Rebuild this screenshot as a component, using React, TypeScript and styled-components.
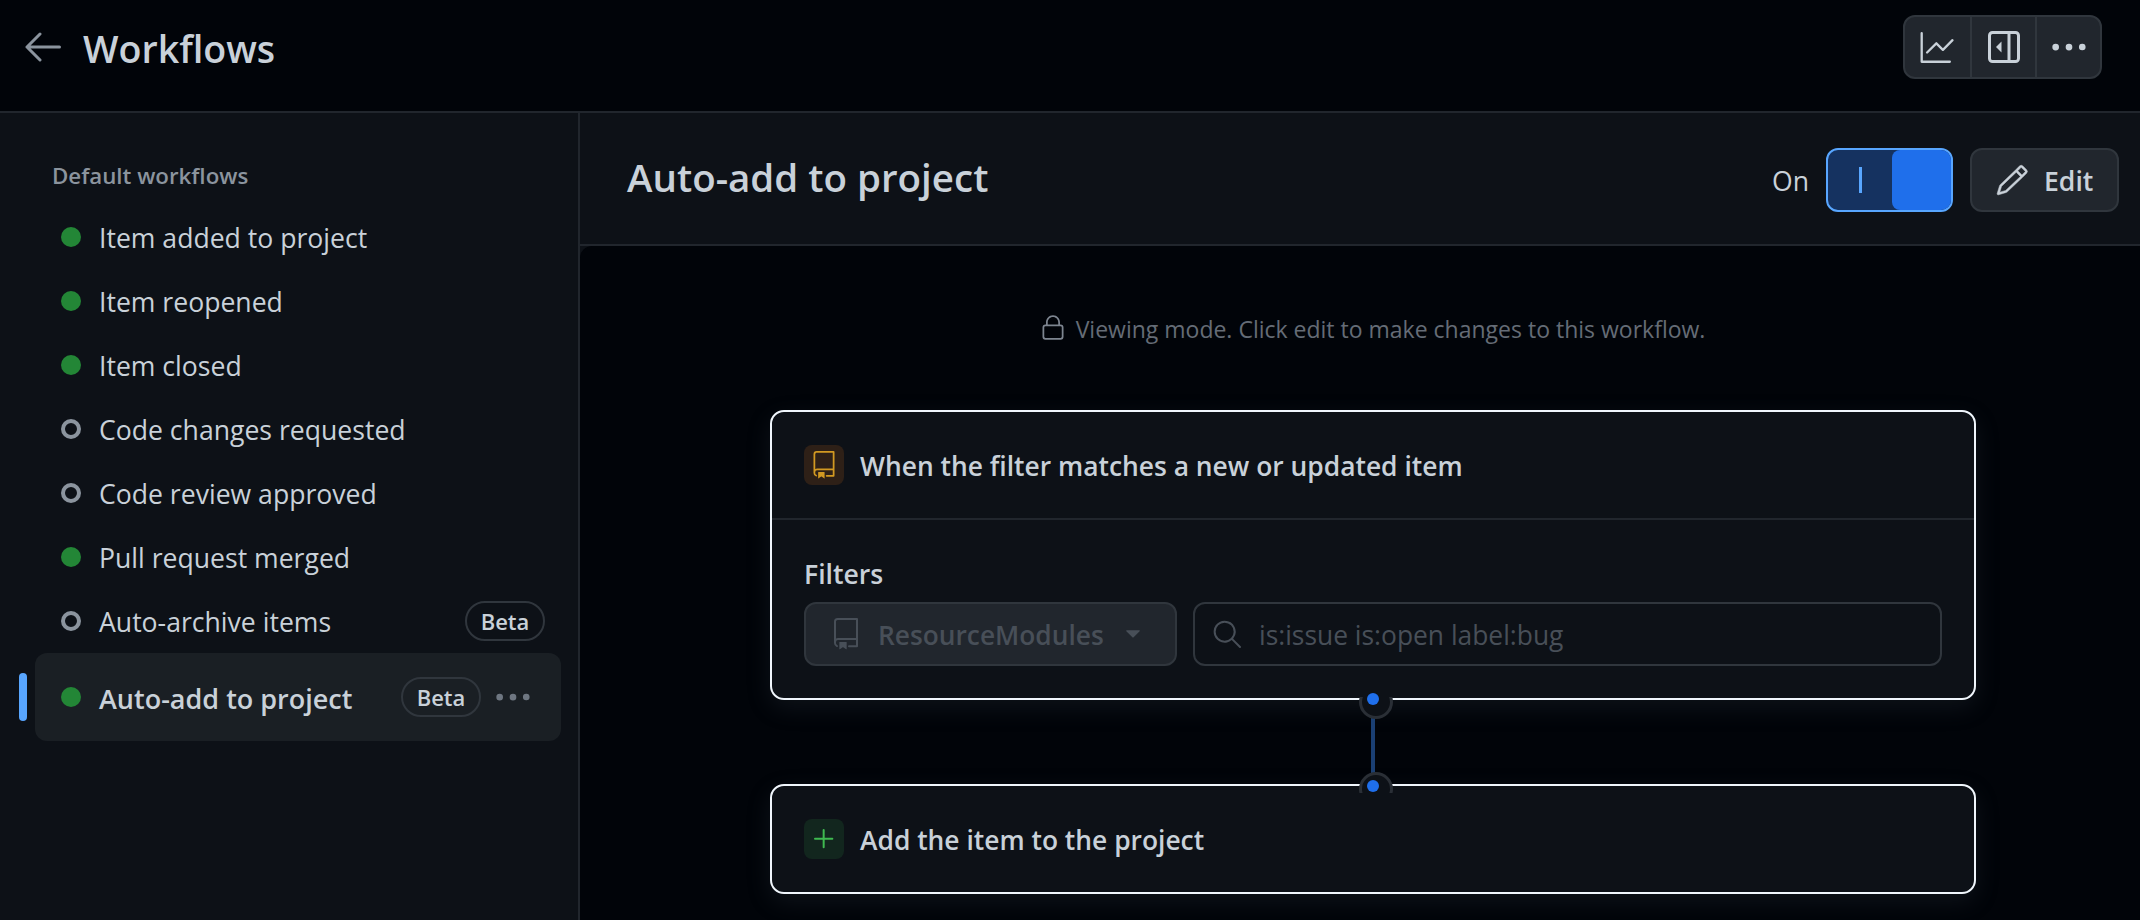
import { createGlobalStyle } from 'styled-components'
import styled from 'styled-components'
import {
  GoGraph,
  GoKebabHorizontal,
  GoLock,
  GoPencil,
  GoPlus,
  GoRepo,
  GoSearch,
  GoTriangleDown,
} from 'react-icons/go'

const colors = {
  canvas: '#010409',
  panel: '#0d1117',
  line: '#21262d',
  control: '#21262d',
  controlLine: '#30363d',
  text: '#c9d1d9',
  muted: '#8b949e',
  faint: '#484f58',
  blue: '#1f6feb',
  sky: '#58a6ff',
  green: '#238636',
}

const GlobalStyle = createGlobalStyle`
  * { box-sizing: border-box; }
  html, body { margin: 0; padding: 0; height: 100%; background: ${colors.canvas}; }
  body {
    font-family: "Open Sans", "Noto Sans", sans-serif;
    font-size: 26.6px;
    color: ${colors.text};
    overflow: hidden;
  }
`

const Page = styled.div`
  display: flex;
  flex-direction: column;
  width: 2140px;
  height: 920px;
`

const TopBar = styled.header`
  display: flex;
  align-items: center;
  justify-content: space-between;
  flex: 0 0 113px;
  padding: 0 38px 17px 25px;
  border-bottom: 2px solid ${colors.line};
  background: ${colors.canvas};
`

const TitleGroup = styled.div`
  display: flex;
  align-items: center;
  gap: 22px;
`

const BackArrow = styled.svg`
  width: 36px;
  height: 30px;
  fill: none;
  stroke: ${colors.muted};
  stroke-width: 3;
  stroke-linecap: round;
  stroke-linejoin: round;
`

const PageTitle = styled.h1`
  margin: 3px 0 0;
  font-size: 37.6px;
  font-weight: 600;
  line-height: 48px;
`

const ButtonGroup = styled.div`
  display: flex;
  height: 64px;
  border: 2px solid ${colors.controlLine};
  border-radius: 12px;
  background: ${colors.control};
`

const GroupButton = styled.div`
  display: flex;
  align-items: center;
  justify-content: center;
  width: 65px;
  color: ${colors.text};
  & + & { border-left: 2px solid ${colors.controlLine}; }
`

const PanelIcon = styled.svg`
  width: 32px;
  height: 32px;
  fill: none;
  stroke: currentColor;
  stroke-width: 3;
`

const Body = styled.div`
  display: flex;
  flex: 1;
  min-height: 0;
`

const Sidebar = styled.aside`
  flex: 0 0 580px;
  padding: 39px 17px 0 35px;
  border-right: 2px solid ${colors.line};
  background: ${colors.panel};
`

const SideHeading = styled.div`
  height: 48px;
  padding-left: 17px;
  margin-bottom: 5px;
  font-size: 22.3px;
  font-weight: 600;
  line-height: 48px;
  color: ${colors.muted};
`

const SideRow = styled.div<{ $active?: boolean }>`
  position: relative;
  display: flex;
  align-items: center;
  height: ${(p) => (p.$active ? '88px' : '64px')};
  padding: 0 16px 0 26px;
  border-radius: 12px;
  background: ${(p) => (p.$active ? '#1a1f24' : 'transparent')};
  font-size: ${(p) => (p.$active ? '27px' : 'inherit')};
  font-weight: ${(p) => (p.$active ? 600 : 400)};
`

const ActiveMark = styled.span`
  position: absolute;
  left: -16px;
  top: 20px;
  width: 8px;
  height: 48px;
  border-radius: 4px;
  background: ${colors.sky};
`

const StatusDot = styled.span<{ $on: boolean }>`
  flex: 0 0 20px;
  height: 20px;
  margin-right: 18px;
  border-radius: 50%;
  background: ${(p) => (p.$on ? colors.green : 'transparent')};
  border: ${(p) => (p.$on ? 'none' : `4px solid ${colors.muted}`)};
`

/* Open Sans sits a little higher in its box than the reference text */
const Label = styled.span`
  padding-top: 2px;
  white-space: nowrap;
`

const RowLabel = styled(Label)`
  flex: 1;
`

const BetaPill = styled.span`
  display: flex;
  align-items: center;
  justify-content: center;
  width: 80px;
  height: 40px;
  border: 2px solid ${colors.controlLine};
  border-radius: 20px;
  font-size: 22px;
  font-weight: 600;
`

const RowMenu = styled.span`
  display: flex;
  margin: 0 12px;
  color: #6e7681;
`

const Main = styled.main`
  display: flex;
  flex-direction: column;
  flex: 1;
  min-width: 0;
  background: ${colors.panel};
`

const TitleBar = styled.div`
  display: flex;
  align-items: center;
  flex: 0 0 133px;
  padding: 2px 21px 0 47px;
  border-bottom: 2px solid ${colors.line};
`

const WorkflowTitle = styled.h2`
  flex: 1;
  margin: 0 0 6px;
  font-size: 38.5px;
  font-weight: 600;
`

const OnLabel = styled(Label)`
  margin-right: 17px;
`

const Toggle = styled.div`
  display: flex;
  width: 127px;
  height: 64px;
  margin-right: 17px;
  border: 2px solid ${colors.sky};
  border-radius: 12px;
  overflow: hidden;
  background: #153260;
`

const ToggleTrack = styled.div`
  display: flex;
  align-items: center;
  justify-content: center;
  flex: 1;
`

const ToggleBar = styled.span`
  width: 3px;
  height: 26px;
  background: ${colors.sky};
`

const ToggleKnob = styled.div`
  flex: 0 0 59px;
  border-radius: 8px 0 0 8px;
  background: ${colors.blue};
`

const EditButton = styled.div`
  display: flex;
  align-items: center;
  gap: 15px;
  width: 149px;
  height: 64px;
  padding-left: 23px;
  border: 2px solid ${colors.controlLine};
  border-radius: 12px;
  background: ${colors.control};
  font-weight: 600;
  svg { stroke: currentColor; stroke-width: 0.35; }
`

const Canvas = styled.section`
  display: flex;
  flex-direction: column;
  flex: 1;
  padding: 0 164px 0 190px;
  border-top-left-radius: 12px;
  background: ${colors.canvas};
`

const ViewingNote = styled.div`
  display: flex;
  align-items: center;
  justify-content: center;
  gap: 9px;
  height: 164px;
  padding-right: 2px;
  font-size: 23px;
  color: #656c76;
  svg { color: #7d8590; }
`

const Card = styled.div`
  flex: none;
  border: 2px solid #f0f6fc;
  border-radius: 14px;
  background: ${colors.panel};
  box-shadow: 0 8px 24px rgba(72, 79, 88, 0.2);
`

const CardHead = styled.div<{ $ruled?: boolean }>`
  display: flex;
  align-items: center;
  gap: 16px;
  height: ${(p) => (p.$ruled ? '108px' : '106px')};
  padding-left: 32px;
  border-bottom: ${(p) => (p.$ruled ? `2px solid ${colors.line}` : 'none')};
  font-size: 26.4px;
  font-weight: 600;
`

const IconTile = styled.span<{ $tone: 'yellow' | 'green' }>`
  display: flex;
  align-items: center;
  justify-content: center;
  width: 40px;
  height: 40px;
  border-radius: 8px;
  background: ${(p) => (p.$tone === 'yellow' ? '#2e2017' : '#12261e')};
  color: ${(p) => (p.$tone === 'yellow' ? '#d29922' : '#3fb950')};
`

const CardBody = styled.div`
  padding: 34px 32px 32px;
`

const FilterLabel = styled.div`
  height: 48px;
  font-weight: 600;
  line-height: 40px;
`

const FilterRow = styled.div`
  display: flex;
  gap: 16px;
`

const RepoSelect = styled.div`
  display: flex;
  align-items: center;
  flex: 0 0 373px;
  height: 64px;
  padding-left: 24px;
  border: 2px solid ${colors.controlLine};
  border-radius: 12px;
  background: ${colors.control};
  color: ${colors.faint};
  font-size: 26.3px;
  font-weight: 600;
  svg:first-child { margin-right: 16px; }
  svg:last-child { margin-left: 16px; }
`

const SearchField = styled.div`
  display: flex;
  align-items: center;
  gap: 16px;
  flex: 1;
  height: 64px;
  padding-left: 16px;
  border: 2px solid ${colors.controlLine};
  border-radius: 12px;
  color: ${colors.faint};
  font-size: 26.4px;
`

const Connector = styled.div`
  position: relative;
  isolation: isolate;
  flex: 0 0 84px;
  align-self: center;
  width: 4px;
  background: #1a3f73;
`

const Node = styled.span<{ $edge: 'top' | 'bottom' }>`
  position: absolute;
  left: -4px;
  ${(p) => (p.$edge === 'top' ? 'top: -7px;' : 'bottom: -8px;')}
  width: 12px;
  height: 12px;
  border-radius: 50%;
  background: ${colors.blue};

  /* only the half of the ring outside the card shows */
  &::before {
    content: '';
    position: absolute;
    left: -8px;
    top: -8px;
    width: 28px;
    height: 28px;
    border-radius: 50%;
    border: 3px solid #2a2f36;
    background: ${colors.panel};
    z-index: -1;
    clip-path: ${(p) => (p.$edge === 'top' ? 'inset(12px 0 0 0)' : 'inset(0 0 13px 0)')};
  }
`

const workflows = [
  { label: 'Item added to project', on: true },
  { label: 'Item reopened', on: true },
  { label: 'Item closed', on: true },
  { label: 'Code changes requested', on: false },
  { label: 'Code review approved', on: false },
  { label: 'Pull request merged', on: true },
  { label: 'Auto-archive items', on: false, beta: true },
]

export default function App() {
  return (
    <Page>
      <GlobalStyle />
      <TopBar>
        <TitleGroup>
          <BackArrow viewBox="0 0 36 30">
            <path d="M34.5 15H2M15 2L2 15l13 13" />
          </BackArrow>
          <PageTitle>Workflows</PageTitle>
        </TitleGroup>
        <ButtonGroup>
          <GroupButton><GoGraph size={37} /></GroupButton>
          <GroupButton>
            <PanelIcon viewBox="0 0 32 32">
              <rect x="1.5" y="1.5" width="29" height="29" rx="3" />
              <path d="M21 2v28" />
              <path d="M13.5 10.5v11L8 16z" fill="currentColor" stroke="none" />
            </PanelIcon>
          </GroupButton>
          <GroupButton><GoKebabHorizontal size={40} /></GroupButton>
        </ButtonGroup>
      </TopBar>
      <Body>
        <Sidebar>
          <SideHeading>Default workflows</SideHeading>
          {workflows.map((w) => (
            <SideRow key={w.label}>
              <StatusDot $on={w.on} />
              <RowLabel>{w.label}</RowLabel>
              {w.beta && <BetaPill>Beta</BetaPill>}
            </SideRow>
          ))}
          <SideRow $active>
            <ActiveMark />
            <StatusDot $on />
            <RowLabel>Auto-add to project</RowLabel>
            <BetaPill>Beta</BetaPill>
            <RowMenu><GoKebabHorizontal size={40} /></RowMenu>
          </SideRow>
        </Sidebar>
        <Main>
          <TitleBar>
            <WorkflowTitle>Auto-add to project</WorkflowTitle>
            <OnLabel>On</OnLabel>
            <Toggle>
              <ToggleTrack><ToggleBar /></ToggleTrack>
              <ToggleKnob />
            </Toggle>
            <EditButton><GoPencil size={34} /><Label>Edit</Label></EditButton>
          </TitleBar>
          <Canvas>
            <ViewingNote>
              <GoLock size={28} />
              <Label>Viewing mode. Click edit to make changes to this workflow.</Label>
            </ViewingNote>
            <Card>
              <CardHead $ruled>
                <IconTile $tone="yellow"><GoRepo size={28} /></IconTile>
                <Label>When the filter matches a new or updated item</Label>
              </CardHead>
              <CardBody>
                <FilterLabel>Filters</FilterLabel>
                <FilterRow>
                  <RepoSelect>
                    <GoRepo size={32} />
                    <Label>ResourceModules</Label>
                    <GoTriangleDown size={26} />
                  </RepoSelect>
                  <SearchField>
                    <GoSearch size={32} />
                    <Label>is:issue is:open label:bug</Label>
                  </SearchField>
                </FilterRow>
              </CardBody>
            </Card>
            <Connector>
              <Node $edge="top" />
              <Node $edge="bottom" />
            </Connector>
            <Card>
              <CardHead>
                <IconTile $tone="green"><GoPlus size={32} /></IconTile>
                <Label>Add the item to the project</Label>
              </CardHead>
            </Card>
          </Canvas>
        </Main>
      </Body>
    </Page>
  )
}
